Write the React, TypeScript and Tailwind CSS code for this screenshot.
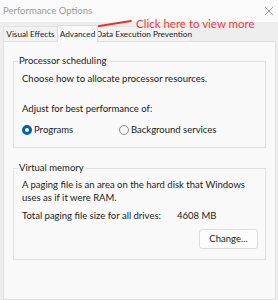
import React from 'react';

const font = { fontFamily: 'Lato, "Noto Sans", sans-serif' };

function Radio({ checked, label }: { checked?: boolean; label: string }) {
    return (
        <div className="flex items-center gap-[2px]">
            {checked ? (
                <span className="w-[10px] h-[10px] rounded-full border-[3px] border-[#005fb8] bg-white box-border" />
            ) : (
                <span className="w-[10px] h-[10px] rounded-full border border-[#8a8a8a] bg-[#f5f5f5] box-border" />
            )}
            <span>{label}</span>
        </div>
    );
}

export default function App() {
    return (
        <div
            className="relative w-[278px] h-[300px] overflow-hidden bg-[#eeeeee] text-[9.5px] text-[#1b1b1b] flex flex-col"
            style={font}
        >
            {/* title bar */}
            <div className="h-[22px] bg-[#fafafa] flex items-center justify-between pl-[3px] pr-[3px]">
                <span className="text-[9.5px] text-[#9a9a9a]">Performance Options</span>
                <svg width="10" height="10" viewBox="0 0 10 10" className="mr-[1px]">
                    <path d="M1 1L9 9M9 1L1 9" stroke="#9a9a9a" strokeWidth="1" />
                </svg>
            </div>

            {/* tabs */}
            <div className="h-[19px] flex items-end pl-[3px] text-[8.2px] whitespace-nowrap">
                <div className="shrink-0 h-[15px] w-[54px] flex items-center justify-center bg-[#f2f2f2] border-t border-l border-[#e2e2e2]">
                    Visual Effects
                </div>
                <div className="shrink-0 relative z-10 h-[17px] w-[41px] -mb-px flex items-center justify-center bg-[#f9f9f9] border-t border-l border-r border-[#dcdcdc]">
                    Advanced
                </div>
                <div className="shrink-0 h-[15px] w-[93px] flex items-center justify-center bg-[#f2f2f2] border-t border-r border-[#e2e2e2]">
                    Data Execution Prevention
                </div>
            </div>

            {/* panel */}
            <div className="flex-1 ml-[3px] mr-[2px] border border-[#e0e0e0] bg-[#f9f9f9] px-[9px] pt-[12px] flex flex-col">
                <fieldset className="border border-[#e2e2e2] px-[8px] pb-[10px]">
                    <legend className="px-[1px] -ml-[4px] leading-[14px]">Processor scheduling</legend>
                    <div className="leading-[14px] mt-[4px]">Choose how to allocate processor resources.</div>
                    <div className="leading-[14px] mt-[16px]">Adjust for best performance of:</div>
                    <div className="leading-[14px] mt-[7px] flex items-center">
                        <div className="w-[97px]">
                            <Radio checked label="Programs" />
                        </div>
                        <Radio label="Background services" />
                    </div>
                </fieldset>

                <fieldset className="mt-[13px] border border-[#e2e2e2] px-[8px] pb-[10px]">
                    <legend className="px-[1px] -ml-[4px] leading-[14px]">Virtual memory</legend>
                    <div className="leading-[13px] mt-[3px]">
                        A paging file is an area on the hard disk that Windows uses as if it were RAM.
                    </div>
                    <div className="leading-[14px] mt-[5px] flex">
                        <span className="w-[155px]">Total paging file size for all drives:</span>
                        <span>4608 MB</span>
                    </div>
                    <div className="flex justify-end mt-[6px]">
                        <button className="w-[59px] h-[20px] mr-[-1px] bg-[#fdfdfd] border border-[#dedede] rounded-[3px] text-[9.5px] leading-none">
                            Change...
                        </button>
                    </div>
                </fieldset>
            </div>

            {/* annotation */}
            <svg className="absolute left-0 top-0 pointer-events-none" width="278" height="40">
                <path d="M93 27L131 21" stroke="#e8322c" strokeWidth="1.8" strokeLinecap="round" />
            </svg>
            <span className="absolute left-[136px] top-[17px] text-[11.5px] leading-[14px] text-[#ee3a3a] whitespace-nowrap">
                Click here to view more
            </span>
        </div>
    );
}
